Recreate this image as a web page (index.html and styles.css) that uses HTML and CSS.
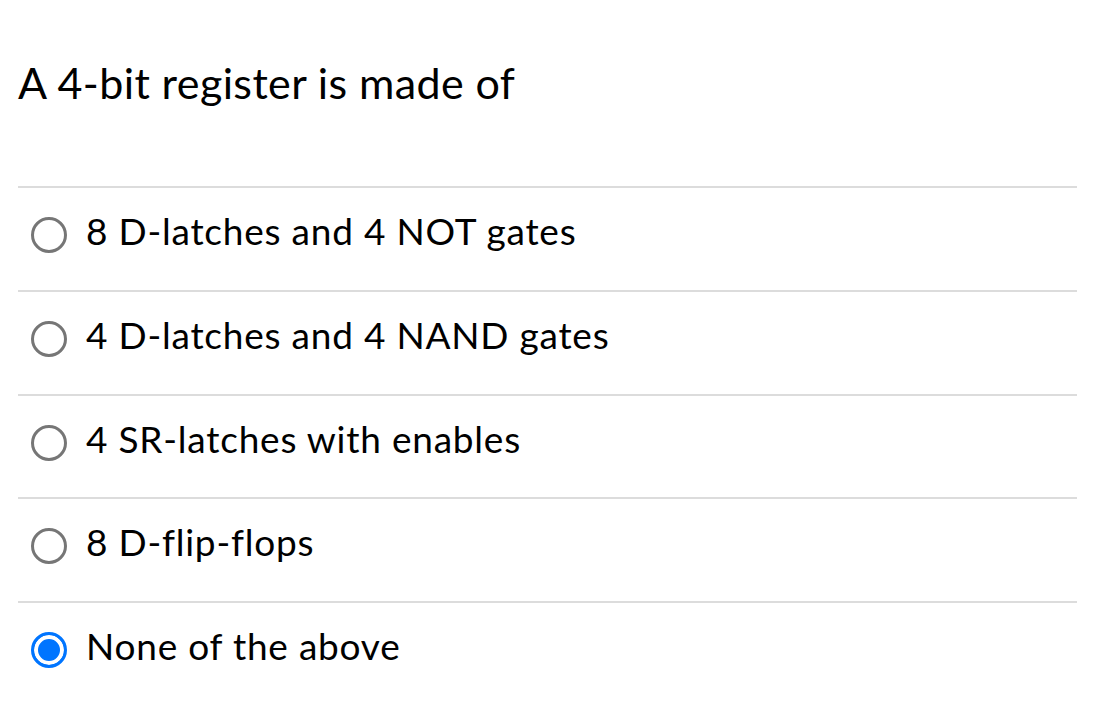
FILE: index.html
```html
<!DOCTYPE html>
<html lang="en">
<head>
<meta charset="utf-8">
<title>Quiz question</title>
<link rel="stylesheet" href="styles.css">
</head>
<body>
<div class="quiz">
  <h1 class="question">A 4-bit register is made of</h1>
  <ul class="options">
    <li class="option"><span class="radio"></span><span class="label">8 D-latches and 4 NOT gates</span></li>
    <li class="option"><span class="radio"></span><span class="label">4 D-latches and 4 NAND gates</span></li>
    <li class="option"><span class="radio"></span><span class="label">4 SR-latches with enables</span></li>
    <li class="option"><span class="radio"></span><span class="label">8 D-flip-flops</span></li>
    <li class="option"><span class="radio checked"></span><span class="label">None of the above</span></li>
  </ul>
</div>
</body>
</html>
```
FILE: styles.css
```css
html, body {
  margin: 0;
  padding: 0;
  background: #fff;
}
body {
  font-family: Lato, "Open Sans", sans-serif;
  color: #000;
}
.quiz {
  padding: 0 20px 0 18px;
}
.question {
  margin: 0;
  padding-top: 57px;
  height: 129px;
  box-sizing: content-box;
  font-size: 43px;
  font-weight: 400;
  line-height: 1.2;
  letter-spacing: 0.4px;
}
.options {
  list-style: none;
  margin: 0;
  padding: 0;
}
.option {
  display: flex;
  align-items: flex-start;
  border-top: 2px solid #dcdcdc;
  padding-top: 21px;
  height: 80.75px;
  box-sizing: content-box;
  font-size: 37px;
  line-height: 1.2;
  letter-spacing: 0.78px;
}
.radio {
  flex: none;
  width: 36px;
  height: 36px;
  box-sizing: border-box;
  border: 3px solid #767676;
  border-radius: 50%;
  margin: 8px 19px 0 13px;
  background: #fff;
}
.radio.checked {
  border-color: #0075ff;
  background: #0075ff;
  box-shadow: inset 0 0 0 4px #fff;
}
.label {
  white-space: nowrap;
}
```
